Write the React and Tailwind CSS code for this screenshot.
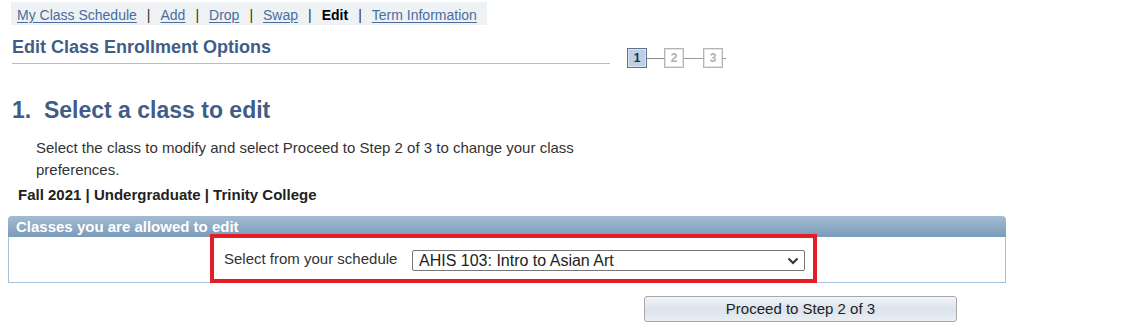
import React from 'react';

const navItems = [
  { label: 'My Class Schedule' },
  { label: 'Add' },
  { label: 'Drop' },
  { label: 'Swap' },
  { label: 'Edit', current: true },
  { label: 'Term Information' },
];

function StepBox({ n, active }) {
  return (
    <div
      className={
        active
          ? 'w-[20px] h-[20px] border border-[#5d7491] bg-[#bdd0e3] flex items-center justify-center text-[12px] font-bold text-[#1d2f4a] shadow-[inset_0_0_0_1px_#d9e4ef]'
          : 'w-[20px] h-[20px] border border-[#b5b5b5] bg-white flex items-center justify-center text-[12px] font-bold text-[#b0b0b0] shadow-[inset_0_0_0_1px_#e4e4e4]'
      }
    >
      {n}
    </div>
  );
}

function StepIndicator() {
  return (
    <div className="flex items-center mt-[11px] ml-[17px]">
      <StepBox n="1" active />
      <div className="w-[17px] h-px bg-[#8a8a8a]" />
      <StepBox n="2" />
      <div className="w-[19px] h-px bg-[#9a9a9a]" />
      <StepBox n="3" />
      <div className="w-[3px] h-px bg-[#9a9a9a]" />
    </div>
  );
}

export default function App() {
  return (
    <div className="w-[1133px] h-[334px] bg-white font-['Liberation_Sans',Arial,sans-serif] text-[14px] text-[#333] overflow-hidden">
      {/* tabs */}
      <div className="ml-[11px] mt-[2px] w-[476px] h-[23px] bg-[#eef2f4] flex items-center pl-[6px] pt-[3px] leading-[20px]">
        {navItems.map((item, i) => (
          <React.Fragment key={item.label}>
            {i > 0 && <span className="mx-[10px] text-[#3a3020]">|</span>}
            {item.current ? (
              <span className="font-bold text-black">{item.label}</span>
            ) : (
              <a href="#" className="text-[#4a6d9c] underline underline-offset-[2px]">
                {item.label}
              </a>
            )}
          </React.Fragment>
        ))}
      </div>

      {/* page title + steps */}
      <div className="flex items-start mt-[12px]">
        <div className="ml-[12px] w-[598px] border-b border-[#bdbdbd] pb-[5px]">
          <h1 className="text-[18px] leading-[21px] font-bold text-[#3f5d86]">
            Edit Class Enrollment Options
          </h1>
        </div>
        <StepIndicator />
      </div>

      <h2 className="ml-[12px] mt-[29px] text-[23px] leading-[26px] font-bold text-[#3f5d86]">
        1.&nbsp; Select a class to edit
      </h2>

      <p className="ml-[36px] mt-[14px] w-[570px] text-[15px] leading-[22px] text-[#333]">
        Select the class to modify and select Proceed to Step 2 of 3 to change your class preferences.
      </p>

      <div className="ml-[18px] mt-[5px] text-[15px] leading-[18px] font-bold text-[#222]">
        Fall 2021 | Undergraduate | Trinity College
      </div>

      {/* grid */}
      <div className="ml-[8px] mt-[12px] w-[998px]">
        <div className="h-[21px] rounded-t-[4px] bg-gradient-to-b from-[#a3bbd2] to-[#7b9bba] px-[8px] text-[15px] leading-[21px] font-bold text-white">
          Classes you are allowed to edit
        </div>
        <div className="h-[46px] border border-t-0 border-[#a5c1dc] bg-white flex items-start">
          <div className="relative z-10 ml-[201px] -mt-[3px] w-[607px] h-[49px] shrink-0 border-[4px] border-[#e31e26] flex items-start pl-[10px] pt-[12px]">
            <span className="w-[188px] text-[15px] leading-[17px] text-[#333]">Select from your schedule</span>
            <div className="w-[393px] h-[21px] border border-[#767676] rounded-[2px] bg-white flex items-center justify-between pl-[6px] pr-[5px]">
              <span className="text-[16px] leading-[19px] text-[#222]">AHIS 103: Intro to Asian Art</span>
              <svg width="12" height="8" viewBox="0 0 12 8" fill="none">
                <path d="M1.5 1.5 L6 6 L10.5 1.5" stroke="#333" strokeWidth="2" />
              </svg>
            </div>
          </div>
        </div>
      </div>

      <button
        type="button"
        className="ml-[644px] mt-[13px] w-[313px] h-[26px] rounded-[3px] border border-[#a9a9a9] bg-gradient-to-b from-[#f2f5f9] via-[#dbe3ec] to-[#e9eef4] text-[15px] leading-[24px] text-[#222] block"
      >
        Proceed to Step 2 of 3
      </button>
    </div>
  );
}
